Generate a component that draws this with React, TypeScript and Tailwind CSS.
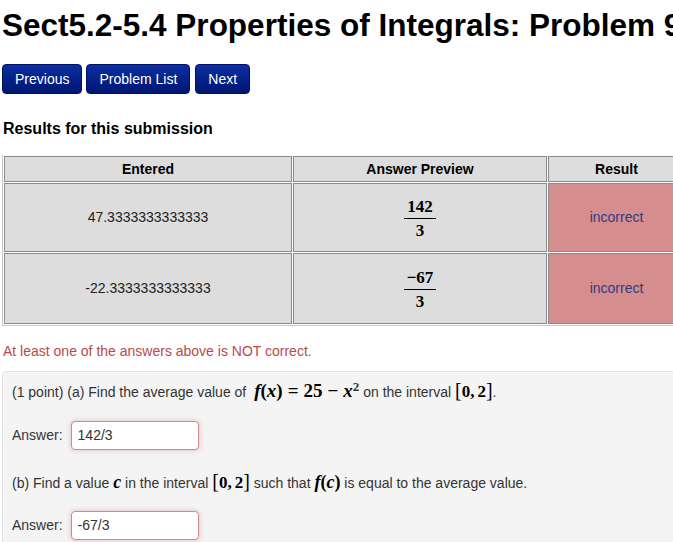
import React from "react";

const serif = { fontFamily: '"Liberation Serif", "DejaVu Serif", serif' } as const;

function M({ children, italic = true, size = "text-[18px]" }: { children: React.ReactNode; italic?: boolean; size?: string }) {
  return (
    <span
      className={`font-bold ${size} leading-none text-black ${italic ? "italic" : ""}`}
      style={serif}
    >
      {children}
    </span>
  );
}

function Frac({ num, den }: { num: string; den: string }) {
  return (
    <span
      className="inline-flex flex-col items-center font-bold text-[17px] leading-none text-black"
      style={serif}
    >
      <span className="px-[3px] pb-[3px]">{num}</span>
      <span className="w-full border-t-[1.5px] border-black" />
      <span className="pt-[3px]">{den}</span>
    </span>
  );
}

function Btn({ children }: { children: React.ReactNode }) {
  return (
    <button className="h-[30px] px-[12px] rounded-[4px] border border-[#001066] bg-gradient-to-b from-[#0c2ea0] to-[#001672] text-white text-[14px] leading-none">
      {children}
    </button>
  );
}

function Interval() {
  return (
    <span className="font-bold text-[17px] leading-none text-black" style={serif}>
      <span className="font-normal text-[20px]">[</span>0,<span className="ml-[3px]">2</span>
      <span className="font-normal text-[20px]">]</span>
    </span>
  );
}

function Input({ value }: { value: string }) {
  return (
    <div className="w-[128px] h-[29px] rounded-[4px] border border-[#cf8a8b] bg-white shadow-[0_0_5px_rgba(210,90,90,0.4)] flex items-center px-[6px] text-[#333]">
      {value}
    </div>
  );
}

export default function App() {
  return (
    <div
      className="w-[673px] h-[542px] overflow-hidden bg-white text-[#333] text-[14px]"
      style={{ fontFamily: '"Liberation Sans", Arial, sans-serif' }}
    >
      <div className="w-[900px]">
        <h1 className="pt-[7px] pl-[2px] text-[31.5px] leading-[37px] font-bold text-black whitespace-nowrap">
          Sect5.2-5.4 Properties of Integrals: Problem 9
        </h1>
        <div className="mt-[20px] pl-[2px] flex gap-[4px]">
          <Btn>Previous</Btn>
          <Btn>Problem List</Btn>
          <div className="ml-px">
            <Btn>Next</Btn>
          </div>
        </div>
        <h2 className="mt-[25px] pl-[3px] text-[16px] leading-[20px] font-bold text-black">
          Results for this submission
        </h2>
        <table className="mt-[16px] ml-[2px] table-fixed border-separate border-spacing-[1px] border-l border-b border-[#c8c8c8] text-[14px] text-[#222]">
          <colgroup>
            <col className="w-[288px]" />
            <col className="w-[254px]" />
            <col className="w-[137px]" />
          </colgroup>
          <thead>
            <tr>
              <th className="h-[26px] bg-[#dddddd] border border-[#8a8a8a] font-bold text-black">Entered</th>
              <th className="h-[26px] bg-[#dddddd] border border-[#8a8a8a] font-bold text-black">Answer Preview</th>
              <th className="h-[26px] bg-[#dddddd] border border-[#8a8a8a] font-bold text-black">Result</th>
            </tr>
          </thead>
          <tbody>
            <tr>
              <td className="h-[69px] bg-[#dddddd] border border-[#8a8a8a] text-center">47.3333333333333</td>
              <td className="h-[69px] bg-[#dddddd] border border-[#8a8a8a] text-center">
                <Frac num="142" den="3" />
              </td>
              <td className="h-[69px] bg-[#d58d8d] border border-[#8a8a8a] text-center text-[#2f3b85]">incorrect</td>
            </tr>
            <tr>
              <td className="h-[71px] bg-[#dddddd] border border-[#8a8a8a] text-center">-22.3333333333333</td>
              <td className="h-[71px] bg-[#dddddd] border border-[#8a8a8a] text-center">
                <Frac num="−67" den="3" />
              </td>
              <td className="h-[71px] bg-[#d58d8d] border border-[#8a8a8a] text-center text-[#2f3b85]">incorrect</td>
            </tr>
          </tbody>
        </table>
        <p className="mt-[15px] pl-[3px] leading-[20px] text-[#b94a48]">
          At least one of the answers above is NOT correct.
        </p>
        <div className="mt-[10px] ml-[2px] h-[300px] rounded-[4px] border border-[#e3e3e3] bg-[#f4f4f4] pt-[8px] pl-[9px]">
          <p className="leading-[20px] h-[20px]">
            (1 point) (a) Find the average value of{" "}
            <span className="ml-[4px]">
              <M size="text-[19px]">f</M>
              <M italic={false} size="text-[19px]">(</M>
              <M size="text-[19px]">x</M>
              <M italic={false} size="text-[19px]">)</M>
              <M italic={false} size="text-[19px]">
                <span className="mx-[5px]">=</span>25<span className="mx-[5px]">−</span>
              </M>
              <M size="text-[19px]">x</M>
              <sup className="font-bold text-[13px]" style={serif}>2</sup>
            </span>{" "}
            on the interval <Interval />.
          </p>
          <div className="mt-[21px] flex items-center gap-[8px]">
            <span>Answer:</span>
            <Input value="142/3" />
          </div>
          <p className="mt-[21px] leading-[20px] h-[20px]">
            (b) Find a value <M>c</M> in the interval <Interval /> such that <M>f</M>
            <M italic={false}>(</M>
            <M>c</M>
            <M italic={false}>)</M> is equal to the average value.
          </p>
          <div className="mt-[20px] flex items-center gap-[8px]">
            <span>Answer:</span>
            <Input value="-67/3" />
          </div>
        </div>
      </div>
    </div>
  );
}
